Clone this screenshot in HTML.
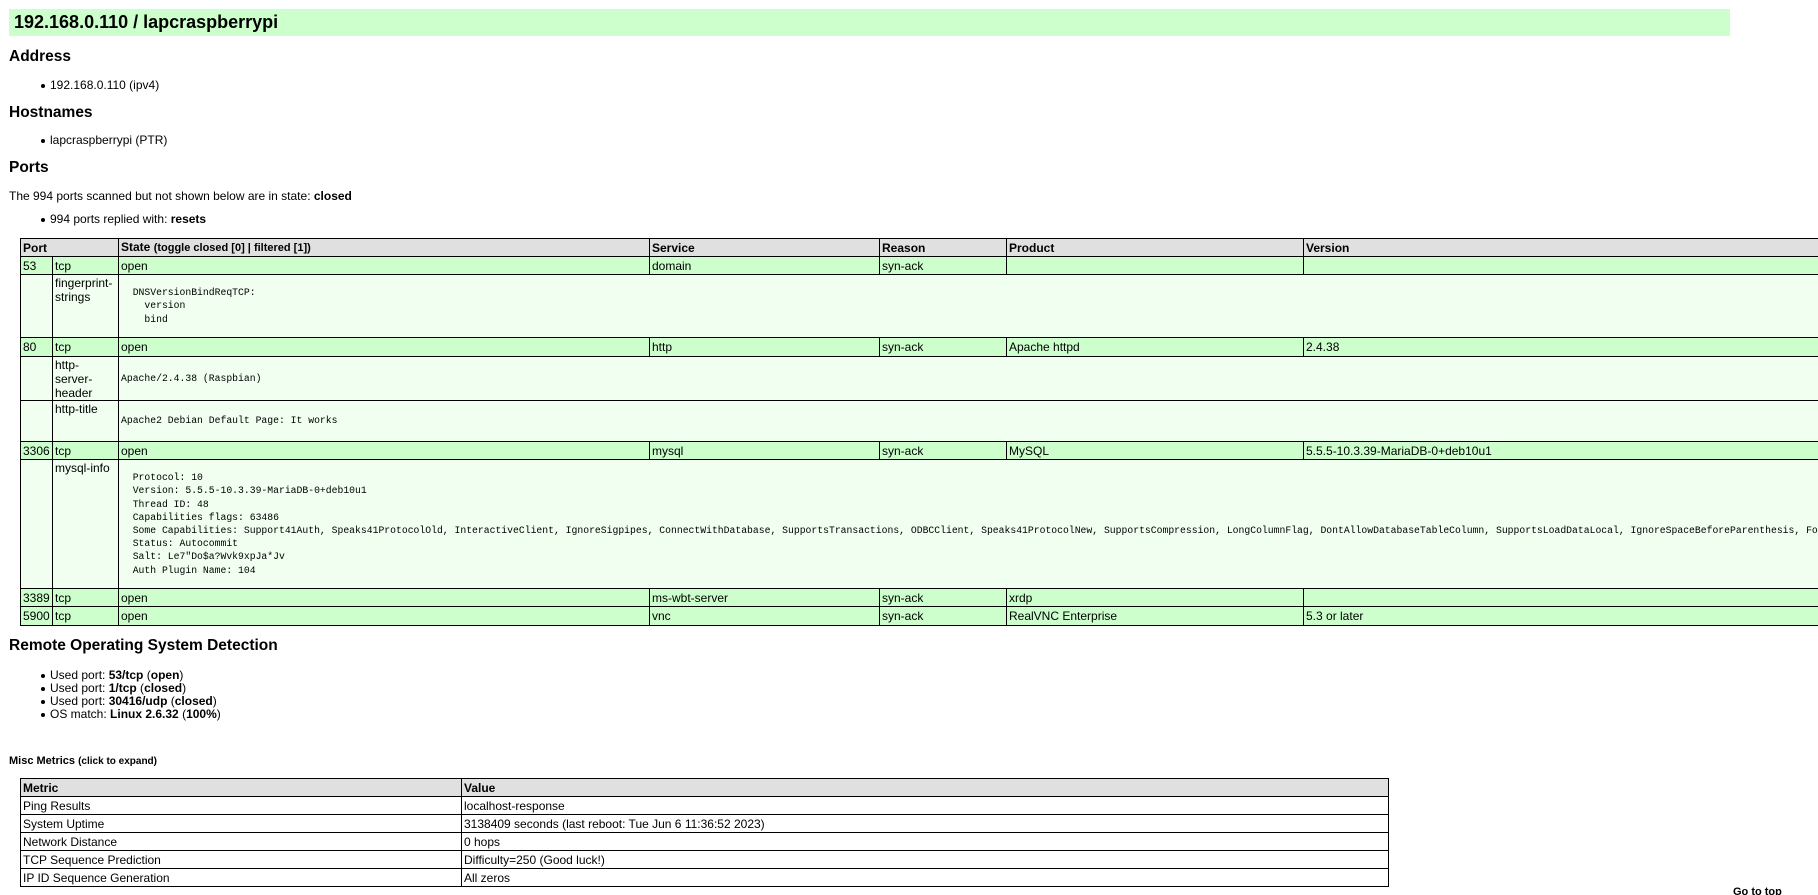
<!DOCTYPE html>
<html><head><meta charset="utf-8">
<style>
html,body{margin:0;padding:0;background:#fff;width:1818px;height:895px;overflow:hidden;}
body{font-family:"Liberation Sans",Tahoma,sans-serif;font-size:12px;color:#000;position:relative;}
.a{position:absolute;white-space:nowrap;}
.h1{left:9px;top:9px;width:1721px;height:27px;background:#ccffcc;font-weight:bold;font-size:18px;line-height:27px;}
.h1 span{padding-left:5px;}
.h{font-weight:bold;font-size:15.5px;left:9px;}
.li{left:50px;}
.li:before{content:"";position:absolute;left:-9px;top:6px;width:4px;height:4px;border-radius:50%;background:#000;}
table{position:absolute;border-collapse:collapse;table-layout:fixed;font-size:12px;}
td{border:1px solid #000;padding:0 2px;line-height:14px;vertical-align:middle;overflow:hidden;white-space:nowrap;}
tr.hd td{background:#e0e0e0;font-weight:bold;}
tr.o td{background:#ccffcc;}
tr.s td{background:#f0fff0;}
tr.s td.k{vertical-align:top;white-space:normal;padding-top:1px;}
pre{margin:0;font-family:"Liberation Mono",monospace;font-size:9.75px;line-height:13.2px;}
.sm{font-weight:bold;font-size:11px;}
</style></head><body>
<div class="a h1"><span>192.168.0.110 / lapcraspberrypi</span></div>
<div class="a h" style="top:48px">Address</div>
<div class="a li" style="top:78px">192.168.0.110 (ipv4)</div>
<div class="a h" style="top:104px">Hostnames</div>
<div class="a li" style="top:133px">lapcraspberrypi (PTR)</div>
<div class="a h" style="top:159px">Ports</div>
<div class="a" style="left:9px;top:189px">The 994 ports scanned but not shown below are in state: <b>closed</b></div>
<div class="a li" style="top:212px">994 ports replied with: <b>resets</b></div>

<table style="left:20px;top:238px;width:1830px">
<colgroup><col style="width:32px"><col style="width:66px"><col style="width:531px"><col style="width:230px"><col style="width:127px"><col style="width:297px"><col style="width:547px"></colgroup>
<tr class="hd" style="height:18px"><td colspan="2">Port</td><td>State <span style="font-size:11px">(toggle closed [0] | filtered [1])</span></td><td>Service</td><td>Reason</td><td>Product</td><td>Version</td></tr>
<tr class="o" style="height:18px"><td>53</td><td>tcp</td><td>open</td><td>domain</td><td>syn-ack</td><td></td><td></td></tr>
<tr class="s" style="height:63px"><td></td><td class="k">fingerprint-strings</td><td colspan="5"><pre>  DNSVersionBindReqTCP:
    version
    bind</pre></td></tr>
<tr class="o" style="height:19px"><td>80</td><td>tcp</td><td>open</td><td>http</td><td>syn-ack</td><td>Apache httpd</td><td>2.4.38</td></tr>
<tr class="s" style="height:44px"><td></td><td class="k">http-server-header</td><td colspan="5"><pre>Apache/2.4.38 (Raspbian)</pre></td></tr>
<tr class="s" style="height:41px"><td></td><td class="k">http-title</td><td colspan="5"><pre>Apache2 Debian Default Page: It works</pre></td></tr>
<tr class="o" style="height:18px"><td>3306</td><td>tcp</td><td>open</td><td>mysql</td><td>syn-ack</td><td>MySQL</td><td>5.5.5-10.3.39-MariaDB-0+deb10u1</td></tr>
<tr class="s" style="height:129px"><td></td><td class="k">mysql-info</td><td colspan="5"><pre>  Protocol: 10
  Version: 5.5.5-10.3.39-MariaDB-0+deb10u1
  Thread ID: 48
  Capabilities flags: 63486
  Some Capabilities: Support41Auth, Speaks41ProtocolOld, InteractiveClient, IgnoreSigpipes, ConnectWithDatabase, SupportsTransactions, ODBCClient, Speaks41ProtocolNew, SupportsCompression, LongColumnFlag, DontAllowDatabaseTableColumn, SupportsLoadDataLocal, IgnoreSpaceBeforeParenthesis, FoundRows, SupportsMultipleResults
  Status: Autocommit
  Salt: Le7"Do$a?Wvk9xpJa*Jv
  Auth Plugin Name: 104</pre></td></tr>
<tr class="o" style="height:18px"><td>3389</td><td>tcp</td><td>open</td><td>ms-wbt-server</td><td>syn-ack</td><td>xrdp</td><td></td></tr>
<tr class="o" style="height:19px"><td>5900</td><td>tcp</td><td>open</td><td>vnc</td><td>syn-ack</td><td>RealVNC Enterprise</td><td>5.3 or later</td></tr>
</table>

<div class="a h" style="top:637px">Remote Operating System Detection</div>
<div class="a li" style="top:668px">Used port: <b>53/tcp</b> (<b>open</b>)</div>
<div class="a li" style="top:681px">Used port: <b>1/tcp</b> (<b>closed</b>)</div>
<div class="a li" style="top:694px">Used port: <b>30416/udp</b> (<b>closed</b>)</div>
<div class="a li" style="top:707px">OS match: <b>Linux 2.6.32</b> (<b>100%</b>)</div>
<div class="a sm" style="left:9px;top:755px">Misc Metrics <span style="font-size:10px">(click to expand)</span></div>

<table style="left:20px;top:778px;width:1368px">
<colgroup><col style="width:441px"><col style="width:927px"></colgroup>
<tr class="hd" style="height:18px"><td>Metric</td><td>Value</td></tr>
<tr style="height:18px"><td>Ping Results</td><td>localhost-response</td></tr>
<tr style="height:18px"><td>System Uptime</td><td>3138409 seconds (last reboot: Tue Jun 6 11:36:52 2023)</td></tr>
<tr style="height:18px"><td>Network Distance</td><td>0 hops</td></tr>
<tr style="height:18px"><td>TCP Sequence Prediction</td><td>Difficulty=250 (Good luck!)</td></tr>
<tr style="height:18px"><td>IP ID Sequence Generation</td><td>All zeros</td></tr>
</table>
<div class="a sm" style="left:1733px;top:886px">Go to top</div>
</body></html>
